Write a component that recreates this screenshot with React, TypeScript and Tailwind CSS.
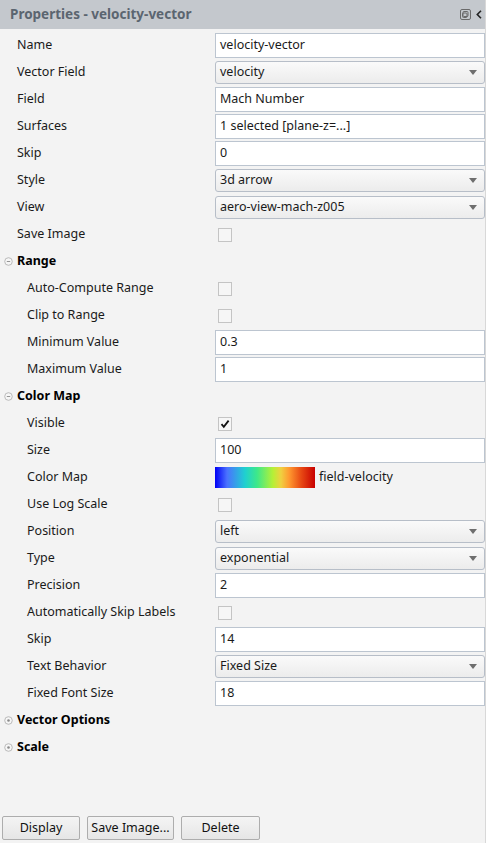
import React from 'react';

type Row =
  | { kind: 'text'; label: string; value: string; indent?: boolean }
  | { kind: 'select'; label: string; value: string; indent?: boolean }
  | { kind: 'check'; label: string; checked?: boolean; indent?: boolean }
  | { kind: 'colormap'; label: string; value: string; indent?: boolean }
  | { kind: 'section'; label: string; open: boolean };

const rows: Row[] = [
  { kind: 'text', label: 'Name', value: 'velocity-vector' },
  { kind: 'select', label: 'Vector Field', value: 'velocity' },
  { kind: 'text', label: 'Field', value: 'Mach Number' },
  { kind: 'text', label: 'Surfaces', value: '1 selected [plane-z=...]' },
  { kind: 'text', label: 'Skip', value: '0' },
  { kind: 'select', label: 'Style', value: '3d arrow' },
  { kind: 'select', label: 'View', value: 'aero-view-mach-z005' },
  { kind: 'check', label: 'Save Image' },
  { kind: 'section', label: 'Range', open: true },
  { kind: 'check', label: 'Auto-Compute Range', indent: true },
  { kind: 'check', label: 'Clip to Range', indent: true },
  { kind: 'text', label: 'Minimum Value', value: '0.3', indent: true },
  { kind: 'text', label: 'Maximum Value', value: '1', indent: true },
  { kind: 'section', label: 'Color Map', open: true },
  { kind: 'check', label: 'Visible', checked: true, indent: true },
  { kind: 'text', label: 'Size', value: '100', indent: true },
  { kind: 'colormap', label: 'Color Map', value: 'field-velocity', indent: true },
  { kind: 'check', label: 'Use Log Scale', indent: true },
  { kind: 'select', label: 'Position', value: 'left', indent: true },
  { kind: 'select', label: 'Type', value: 'exponential', indent: true },
  { kind: 'text', label: 'Precision', value: '2', indent: true },
  { kind: 'check', label: 'Automatically Skip Labels', indent: true },
  { kind: 'text', label: 'Skip', value: '14', indent: true },
  { kind: 'select', label: 'Text Behavior', value: 'Fixed Size', indent: true },
  { kind: 'text', label: 'Fixed Font Size', value: '18', indent: true },
  { kind: 'section', label: 'Vector Options', open: false },
  { kind: 'section', label: 'Scale', open: false },
];

function SectionIcon({ open }: { open: boolean }) {
  return (
    <svg width="9" height="9" viewBox="0 0 9 9" className="shrink-0">
      <circle cx="4.5" cy="4.5" r="3.8" fill="#f6f6f6" stroke="#b4b4b4" strokeWidth="0.9" />
      {open ? (
        <line x1="2.8" y1="4.5" x2="6.2" y2="4.5" stroke="#8a8a8a" strokeWidth="0.9" />
      ) : (
        <circle cx="4.5" cy="4.5" r="1.3" fill="#8a8a8a" />
      )}
    </svg>
  );
}

function Control({ row }: { row: Row }) {
  if (row.kind === 'text') {
    return (
      <div className="w-[270px] h-[25px] bg-white border border-[#bcc5d0] flex items-center px-[4px] text-[#1a1a1a]">
        {row.value}
      </div>
    );
  }
  if (row.kind === 'select') {
    return (
      <div className="w-[270px] h-[23px] rounded-[3px] border border-[#b7bec8] bg-gradient-to-b from-[#fafafa] to-[#ececec] flex items-center justify-between pl-[4px] pr-[7px] text-[#1a1a1a]">
        <span>{row.value}</span>
        <svg width="8" height="5" viewBox="0 0 8 5">
          <polygon points="0,0 8,0 4,5" fill="#6e6e6e" />
        </svg>
      </div>
    );
  }
  if (row.kind === 'check') {
    return (
      <div className="pl-[3px]">
        <div className="w-[14px] h-[14px] border border-[#c4c4c4] bg-[#f6f6f6] flex items-center justify-center">
          {row.checked && (
            <svg width="10" height="10" viewBox="0 0 10 10">
              <path d="M1.5 5.2 L3.8 7.8 L8.6 1.6" fill="none" stroke="#111" strokeWidth="1.8" />
            </svg>
          )}
        </div>
      </div>
    );
  }
  if (row.kind === 'colormap') {
    return (
      <div className="flex items-center gap-[4px]">
        <div className="w-[100px] h-[21px] bg-[linear-gradient(to_right,#0000f5_0%,#4a72ff_12%,#1fd0d0_30%,#3de88a_42%,#b6f036_58%,#f0d040_66%,#ff9a30_74%,#e84a14_86%,#c80000_100%)]" />
        <span className="text-[#1a1a1a]">{row.value}</span>
      </div>
    );
  }
  return null;
}

export default function App() {
  return (
    <div
      className="w-[486px] h-[843px] bg-[#f3f3f3] flex flex-col text-[12.5px] text-[#1a1a1a] overflow-hidden border-r border-[#d8d8d8]"
      style={{ fontFamily: '"Noto Sans", "Open Sans", sans-serif' }}
    >
      {/* Title bar */}
      <div className="h-[29px] shrink-0 bg-[#c4c8cd] flex items-center justify-between pl-[10px] pr-[3px]">
        <span className="font-bold text-[13.5px] text-[#5b6570]">Properties - velocity-vector</span>
        <div className="flex items-center gap-[5px]">
          <svg width="11" height="11" viewBox="0 0 11 11">
            <rect x="0.5" y="0.5" width="10" height="10" rx="1.5" fill="none" stroke="#6a6a6a" />
            <rect x="3" y="2.5" width="5" height="5" rx="1" fill="none" stroke="#6a6a6a" />
            <rect x="2.5" y="4" width="4.5" height="4.5" rx="1" fill="none" stroke="#6a6a6a" />
          </svg>
          <svg width="6" height="9" viewBox="0 0 6 9">
            <path d="M5 0.8 L1.3 4.5 L5 8.2" fill="none" stroke="#222" strokeWidth="1.6" />
          </svg>
        </div>
      </div>

      {/* Property rows */}
      <div className="pt-[3px]">
        {rows.map((row, i) =>
          row.kind === 'section' ? (
            <div key={i} className="h-[27px] flex items-center pl-[4px]">
              <SectionIcon open={row.open} />
              <span className="ml-[4px] font-bold text-[#000]">{row.label}</span>
            </div>
          ) : (
            <div key={i} className="h-[27px] flex items-center">
              <div className={`w-[215px] shrink-0 ${row.indent ? 'pl-[27px]' : 'pl-[17px]'}`}>{row.label}</div>
              <Control row={row} />
            </div>
          )
        )}
      </div>

      {/* Buttons */}
      <div className="mt-auto flex gap-[7px] pl-[2px] pb-[3px]">
        <button className="w-[78px] h-[24px] border border-[#adadad] rounded-[2px] bg-gradient-to-b from-[#f4f4f4] to-[#e6e6e6] text-[#111]">
          Display
        </button>
        <button className="w-[87px] h-[24px] border border-[#adadad] rounded-[2px] bg-gradient-to-b from-[#f4f4f4] to-[#e6e6e6] text-[#111]">
          Save Image...
        </button>
        <button className="w-[79px] h-[24px] border border-[#adadad] rounded-[2px] bg-gradient-to-b from-[#f4f4f4] to-[#e6e6e6] text-[#111]">
          Delete
        </button>
      </div>
    </div>
  );
}
